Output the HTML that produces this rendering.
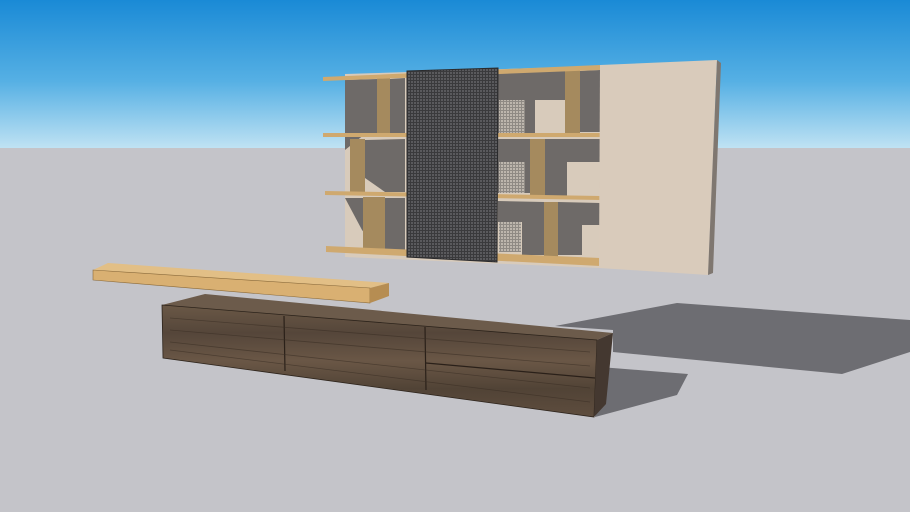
<!DOCTYPE html>
<html><head><meta charset="utf-8"><style>
html,body{margin:0;padding:0;width:910px;height:512px;overflow:hidden;background:#c4c4c9}
</style></head><body>
<svg width="910" height="512" viewBox="0 0 910 512" xmlns="http://www.w3.org/2000/svg">
<defs>
<linearGradient id="sky" x1="0" y1="0" x2="0" y2="1">
<stop offset="0" stop-color="#1a8ad6"/><stop offset="0.55" stop-color="#56b0e4"/><stop offset="1" stop-color="#bfe2f3"/>
</linearGradient>
<pattern id="mesh" width="3" height="3" patternUnits="userSpaceOnUse">
<rect width="3" height="3" fill="#3a3a3c"/><rect width="2" height="2" fill="#5a5a5d"/>
</pattern>
<pattern id="meshl" width="3" height="3" patternUnits="userSpaceOnUse">
<rect width="3" height="3" fill="#8f8a84"/><rect width="2" height="2" fill="#bdb6ad"/>
</pattern>
<linearGradient id="dw" x1="0" y1="0" x2="0" y2="1">
<stop offset="0" stop-color="#6a5846"/><stop offset="0.25" stop-color="#55463a"/><stop offset="0.5" stop-color="#6a5746"/><stop offset="0.75" stop-color="#514336"/><stop offset="1" stop-color="#5e4d3e"/>
</linearGradient>
</defs>
<rect width="910" height="148" fill="url(#sky)"/>
<rect y="148" width="910" height="364" fill="#c4c4c9"/>
<polygon points="555,326 677,303 910,320 910,352 842,374 613,352 613,330" fill="#6d6d72"/>
<polygon points="600,367 688,374 677,395 595,417" fill="#6d6d72"/>
<polygon points="345,74 600,66 600,268 345,257" fill="#d8cbbb"/>
<polygon points="345,80 378,79 378,134 365,134 345,150" fill="#6e6a68"/>
<polygon points="390,79 405,78 405,134 390,134" fill="#6e6a68"/>
<polygon points="365,140 405,139 405,192 385,192 365,178" fill="#6e6a68"/>
<polygon points="345,198 405,198 405,250 378,250 362,230" fill="#6e6a68"/>
<polygon points="498,72 565,71 565,100 535,100 535,133 498,133" fill="#6e6a68"/>
<polygon points="580,71 600,70 600,132 580,132" fill="#6e6a68"/>
<polygon points="498,139 530,139 530,193 498,193" fill="#6e6a68"/>
<polygon points="545,139 600,139 600,162 567,162 567,196 545,196" fill="#6e6a68"/>
<polygon points="498,201 544,202 544,255 522,255 522,222 498,222" fill="#6e6a68"/>
<polygon points="558,202 600,203 600,225 582,225 582,255 558,255" fill="#6e6a68"/>
<rect x="499" y="100" width="26" height="33" fill="url(#meshl)"/>
<rect x="499" y="162" width="26" height="31" fill="url(#meshl)"/>
<rect x="499" y="222" width="22" height="30" fill="url(#meshl)"/>
<polygon points="377,78 390,78 390,134 377,134" fill="#a58a5e"/>
<polygon points="350,139 365,139 365,192 350,192" fill="#a58a5e"/>
<polygon points="363,197 385,197 385,250 363,250" fill="#a58a5e"/>
<polygon points="565,71 580,70 580,133 565,133" fill="#a58a5e"/>
<polygon points="530,139 545,139 545,196 530,196" fill="#a58a5e"/>
<polygon points="544,202 558,202 558,258 544,258" fill="#a58a5e"/>
<polygon points="323,77 600,65 600,70 323,81" fill="#cfa96f"/>
<polygon points="323,133 600,133 600,137 323,137" fill="#cfa96f"/>
<polygon points="325,191 600,196 600,200 325,195" fill="#cfa96f"/>
<polygon points="326,246 600,258 600,266 326,252" fill="#cfa96f"/>
<polygon points="407,71 498,68 497,262 407,257" fill="url(#mesh)" stroke="#2a2a2c" stroke-width="1"/>
<polygon points="600,65 717,60 708,275 599,268" fill="#d9cbbb"/>
<polygon points="717,60 721,63 713,273 708,275" fill="#7f7770"/>
<polygon points="93,270 108,263 389,283 370,288" fill="#e2bf86"/>
<polygon points="93,270 370,288 370,303 93,280" fill="#d9b072" stroke="#8a6a3a" stroke-width="0.6"/>
<polygon points="370,288 389,283 389,296 370,303" fill="#b68d52"/>
<polygon points="162,305 205,294 613,333 597,340" fill="#6c5b4b"/>
<polygon points="162,305 597,340 594,417 163,358" fill="url(#dw)" stroke="#2c231b" stroke-width="0.8"/>
<polygon points="597,340 613,333 606,404 594,417" fill="#443830"/>
<line x1="284" y1="316" x2="285" y2="371" stroke="#2a2019" stroke-width="1.2"/>
<line x1="425" y1="327" x2="426" y2="390" stroke="#2a2019" stroke-width="1.2"/>
<line x1="426" y1="363" x2="595" y2="378" stroke="#2a2019" stroke-width="1.2"/>
<g stroke="#3a2e24" stroke-width="0.8" opacity="0.6">
<line x1="170" y1="318" x2="590" y2="352"/><line x1="170" y1="330" x2="590" y2="366"/>
<line x1="170" y1="342" x2="590" y2="388"/><line x1="170" y1="350" x2="590" y2="402"/>
</g>
</svg>
</body></html>
